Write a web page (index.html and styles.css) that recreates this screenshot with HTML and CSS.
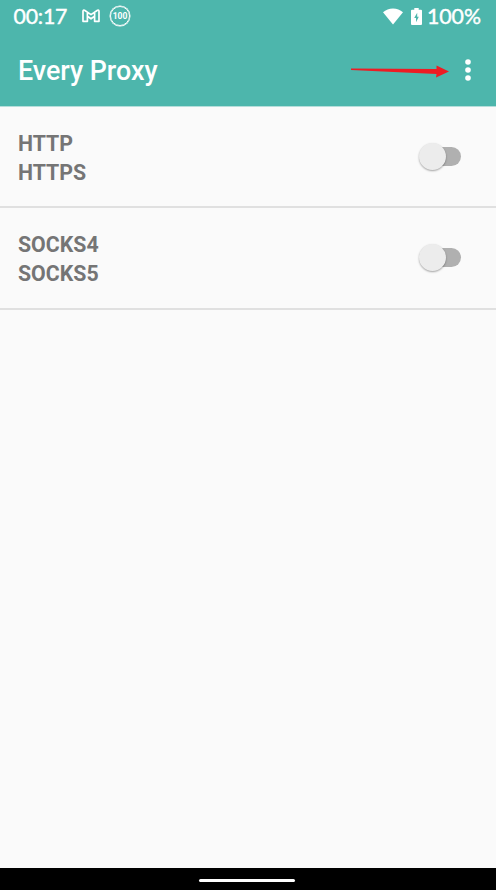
FILE: index.html
```html
<!DOCTYPE html>
<html lang="en">
<head>
<meta charset="utf-8">
<title>Every Proxy</title>
<link rel="stylesheet" href="styles.css">
</head>
<body>
<div class="screen">
  <header class="top">
    <div class="status">
      <span class="clock">00:17</span>
      <svg class="mail" width="18" height="14" viewBox="0 0 18 14"><path d="M1 12.300V2.200Q1.100.8 2.500 1.300L9 5.600l6.500-4.300Q16.900.8 17 2.200V12.300H12.600V7.300L9 9.800 5.400 7.300V12.300ZM5.400 7.300V4M12.600 7.300V4"/></svg>
      <span class="badge">100</span>
      <svg class="wifi" width="20" height="17" viewBox="0 0 20 17"><path d="M0 4.300Q4.200.5 10 .5T20 4.300L10 16.500Z"/></svg>
      <svg class="battery" width="11" height="17" viewBox="0 0 11 17"><path class="cell" d="M3.300 0H7.700V1.700H10Q11 1.700 11 2.700V16Q11 17 10 17H1Q0 17 0 16V2.700Q0 1.700 1 1.700H3.300Z"/><path class="bolt" d="M6.200 4.800 3.200 10H5V14.200L7.800 8.700H6.200Z"/></svg>
      <span class="percent">100%</span>
    </div>
    <div class="bar">
      <h1>Every Proxy</h1>
      <svg class="arrow" width="98" height="14" viewBox="0 0 98 14"><path d="M0 4.400 85.500 5V1.400L98 7.500 85 13.400 85.500 9.900 0 6.100Z"/></svg>
      <svg class="more" width="6" height="22" viewBox="0 0 6 22"><circle cx="3" cy="3" r="2.800"/><circle cx="3" cy="11" r="2.800"/><circle cx="3" cy="19" r="2.800"/></svg>
    </div>
  </header>
  <main>
    <section class="row">
      <div class="label">HTTP<br>HTTPS</div>
      <div class="switch"><span class="track"></span><span class="thumb"></span></div>
    </section>
    <section class="row">
      <div class="label">SOCKS4<br>SOCKS5</div>
      <div class="switch"><span class="track"></span><span class="thumb"></span></div>
    </section>
  </main>
  <footer class="nav"><span class="handle"></span></footer>
</div>
</body>
</html>
```
FILE: styles.css
```css
* { box-sizing: border-box; }
body { margin: 0; font-family: Roboto, sans-serif; }
svg { display: block; flex: none; }
.screen { width: 496px; height: 890px; display: flex; flex-direction: column; background: #fafafa; overflow: hidden; }
.top { height: 107px; background: #4db6ac; border-bottom: 1px solid #b5dedb; color: #fff; flex: none; }
.status { height: 34px; padding: 0 15px 2px 13.500px; display: flex; align-items: center; font-family: Lato, sans-serif; font-size: 21.300px; line-height: 32px; }
.clock, .percent { -webkit-text-stroke: .4px #fff; white-space: nowrap; }
.clock { width: 68.500px; letter-spacing: -.2px; }
.mail { fill: none; stroke: #fff; stroke-width: 1.700; stroke-linejoin: round; }
.badge { width: 20px; height: 20px; margin-left: 10px; border: 1px solid #fff; box-shadow: 0 0 0 .5px #fff; border-radius: 50%; display: flex; align-items: center; justify-content: center; font: 700 8.500px/1 Roboto, sans-serif; }
.wifi { margin-left: auto; fill: #fff; }
.battery { margin: 0 5px 0 8px; }
.cell { fill: #fff; }
.bolt { fill: #4db6ac; }
.percent { width: 54px; letter-spacing: -.05px; }
.bar { height: 72px; padding: 0 25px 0 18px; display: flex; align-items: center; }
h1 { margin: 0; padding-top: 2px; font-size: 26.800px; font-weight: 500; line-height: 72px; white-space: nowrap; }
.arrow { margin: 2px 0 0 auto; fill: #ed1c24; }
.more { margin: -1px 0 0 16px; fill: #fff; }
main { flex: 1; }
.row { height: 101.300px; padding: 0 34px 0 18px; border-bottom: 2px solid #e0e0e0; display: flex; align-items: center; justify-content: space-between; }
.label { color: #757575; font-size: 21.300px; font-weight: 700; line-height: 29px; padding-top: 2.500px; }
.switch { width: 44px; height: 28px; display: flex; align-items: center; }
.track { width: 36px; height: 19px; margin-left: 7px; border-radius: 10px; background: #b0b0b0; flex: none; }
.thumb { width: 27px; height: 27px; margin-left: -42px; border-radius: 50%; background: #ececec; box-shadow: 0 1px 2px rgba(0,0,0,.35); flex: none; }
.nav { height: 22px; background: #000; display: flex; justify-content: center; padding: 11px 0 0; flex: none; }
.handle { width: 96px; height: 3px; border-radius: 2px; background: #fff; margin-right: 2px; }
```
